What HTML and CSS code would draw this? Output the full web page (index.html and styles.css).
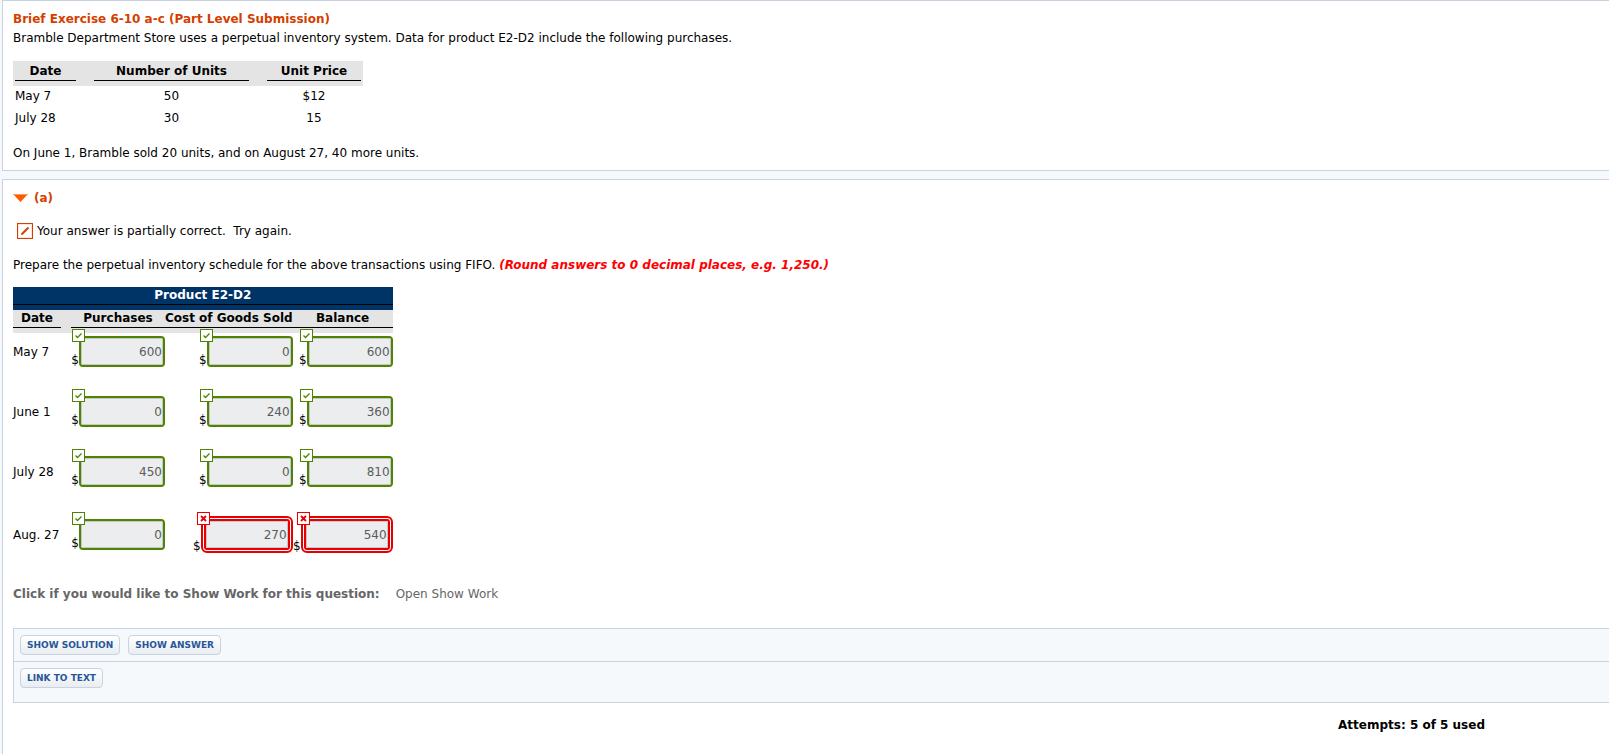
FILE: index.html
```html
<!DOCTYPE html>
<html lang="en">
<head>
<meta charset="utf-8">
<title>Brief Exercise 6-10 a-c</title>
<link rel="stylesheet" href="styles.css">
</head>
<body>
<svg class="symbols" aria-hidden="true">
  <symbol id="ok" viewBox="0 0 13 13"><rect x=".5" y=".5" width="12" height="12" fill="#fff" stroke="#4f8400"/><path d="M3.5 6.5 5.5 8.5 9.5 4.5" fill="none" stroke="#4f8400" stroke-width="1.3"/></symbol>
  <symbol id="bad" viewBox="0 0 13 13"><rect x=".5" y=".5" width="12" height="12" fill="#fff" stroke="#e60000"/><path d="M4 4 9 9M9 4 4 9" fill="none" stroke="#e60000" stroke-width="1.8"/></symbol>
</svg>
<main class="page">
  <section class="panel">
    <h1 class="title">Brief Exercise 6-10 a-c (Part Level Submission)</h1>
    <p class="text">Bramble Department Store uses a perpetual inventory system. Data for product E2-D2 include the following purchases.</p>
    <table class="data">
      <thead>
        <tr><th class="data-date"><span class="head">Date</span></th><td class="spacer"></td><th class="data-units"><span class="head">Number of Units</span></th><td class="spacer"></td><th class="data-price"><span class="head">Unit Price</span></th></tr>
      </thead>
      <tbody>
        <tr><td>May 7</td><td></td><td class="center">50</td><td></td><td class="center">$12</td></tr>
        <tr><td>July 28</td><td></td><td class="center">30</td><td></td><td class="center">15</td></tr>
      </tbody>
    </table>
    <p class="text">On June 1, Bramble sold 20 units, and on August 27, 40 more units.</p>
  </section>

  <section class="panel panel-part">
    <h2 class="title part"><svg class="arrow" viewBox="0 0 15 8" aria-hidden="true"><path d="M0 0H15L7.5 8Z" fill="#ff5a00"/><path d="M0 .5H15" stroke="#ff9a52"/></svg>(a)</h2>
    <p class="result"><svg class="partial" viewBox="0 0 16 16" aria-hidden="true"><rect x=".5" y=".5" width="15" height="15" fill="#fff" stroke="#d43f00"/><rect x="1.5" y="1.5" width="13" height="13" fill="#fff" stroke="#f9e5dc"/><path d="M4.5 11.5 11.5 4.5" stroke="#d43f00" stroke-width="2"/></svg>Your answer is partially correct.&nbsp; Try again.</p>
    <p class="text">Prepare the perpetual inventory schedule for the above transactions using FIFO. <em class="hint">(Round answers to 0 decimal places, e.g. 1,250.)</em></p>

    <table class="schedule">
      <thead>
        <tr class="product"><th colspan="5"><span class="head">Product E2-D2</span></th></tr>
        <tr class="columns"><th class="col-date"><span class="head">Date</span></th><td class="col-gap"></td><th class="col-purchases"><span class="head">Purchases</span></th><th class="col-cost"><span class="head">Cost of Goods Sold</span></th><th class="col-balance"><span class="head">Balance</span></th></tr>
      </thead>
      <tbody>
        <tr><td>May 7</td><td></td>
          <td><label class="field">$<span class="box"><input aria-label="May 7 purchases" value="600" readonly><svg class="badge"><use href="#ok"/></svg></span></label></td>
          <td><label class="field">$<span class="box"><input aria-label="May 7 cost of goods sold" value="0" readonly><svg class="badge"><use href="#ok"/></svg></span></label></td>
          <td><label class="field">$<span class="box"><input aria-label="May 7 balance" value="600" readonly><svg class="badge"><use href="#ok"/></svg></span></label></td></tr>
        <tr><td>June 1</td><td></td>
          <td><label class="field">$<span class="box"><input aria-label="June 1 purchases" value="0" readonly><svg class="badge"><use href="#ok"/></svg></span></label></td>
          <td><label class="field">$<span class="box"><input aria-label="June 1 cost of goods sold" value="240" readonly><svg class="badge"><use href="#ok"/></svg></span></label></td>
          <td><label class="field">$<span class="box"><input aria-label="June 1 balance" value="360" readonly><svg class="badge"><use href="#ok"/></svg></span></label></td></tr>
        <tr><td>July 28</td><td></td>
          <td><label class="field">$<span class="box"><input aria-label="July 28 purchases" value="450" readonly><svg class="badge"><use href="#ok"/></svg></span></label></td>
          <td><label class="field">$<span class="box"><input aria-label="July 28 cost of goods sold" value="0" readonly><svg class="badge"><use href="#ok"/></svg></span></label></td>
          <td><label class="field">$<span class="box"><input aria-label="July 28 balance" value="810" readonly><svg class="badge"><use href="#ok"/></svg></span></label></td></tr>
        <tr><td>Aug. 27</td><td></td>
          <td><label class="field">$<span class="box"><input aria-label="Aug. 27 purchases" value="0" readonly><svg class="badge"><use href="#ok"/></svg></span></label></td>
          <td><label class="field">$<span class="box wrong"><input aria-label="Aug. 27 cost of goods sold" value="270" readonly><svg class="badge"><use href="#bad"/></svg></span></label></td>
          <td><label class="field">$<span class="box wrong"><input aria-label="Aug. 27 balance" value="540" readonly><svg class="badge"><use href="#bad"/></svg></span></label></td></tr>
      </tbody>
    </table>

    <p class="work"><b>Click if you would like to Show Work for this question:</b><a href="#work">Open Show Work</a></p>

    <div class="tools">
      <div class="tool-row"><button type="button">SHOW SOLUTION</button><button type="button">SHOW ANSWER</button></div>
      <div class="tool-row tool-row-last"><button type="button">LINK TO TEXT</button></div>
    </div>
    <p class="attempts">Attempts: 5 of 5 used</p>
  </section>
</main>
</body>
</html>
```
FILE: styles.css
```css
* { box-sizing: border-box; }

body {
  margin: 0;
  background: #f5f9fc;
  color: #000;
  font: 12px/18px Verdana, "DejaVu Sans", sans-serif;
}

p, h1, h2 { margin: 0; }
.symbols { display: none; }

.page {
  display: flex;
  flex-direction: column;
  gap: 8px;
  min-height: 100vh;
  padding-left: 2px;
}

.panel {
  background: #fff;
  border: solid #c9d2e0;
  border-width: 1px 0 1px 1px;
  padding: 8px 0 8px 10px;
}

.panel-part {
  flex: 1;
  border-bottom: 0;
}

.title {
  color: #d43f00;
  font-size: 12px;
  line-height: 20px;
  font-weight: bold;
}

table { border-collapse: collapse; }
th, td { padding: 0; }

.head {
  display: block;
  border-bottom: 1px solid #000;
  line-height: 17px;
  white-space: nowrap;
}

.data { margin: 14px 0; }
.data thead { background: #e4e4e4; }
.data th { padding: 2px 2px 5px; }
.data tbody td { padding: 1px 2px 3px; }
.data .data-date { width: 65px; }
.data .data-units { width: 159px; }
.data .data-price { width: 98px; }
.data .spacer { width: 14px; }
.center { text-align: center; }

.part {
  display: flex;
  align-items: center;
  gap: 6px;
}
.arrow { width: 15px; height: 8px; }

.result {
  display: flex;
  align-items: center;
  gap: 4px;
  margin: 14px 0 16px 4px;
}
.partial { width: 16px; height: 16px; }
.hint { color: #f00; font-weight: bold; }

.schedule { margin-top: 13px; }
.schedule th { padding-bottom: 5px; }
.product { background: #003366; color: #fff; }
.columns { background: #e4e4e4; }
.col-date { width: 48px; }
.col-gap { width: 10px; }
.col-purchases { width: 94px; }
.col-cost { width: 127px; }
.col-balance { width: 100px; }
.schedule tbody td {
  padding: 3px 0 26px;
  white-space: nowrap;
}

.field {
  display: flex;
  justify-content: flex-end;
  align-items: flex-end;
  line-height: 14px;
}
.box {
  position: relative;
  border: 2px solid #4f8400;
  border-radius: 4px;
}
.wrong {
  border: 5px double #e60000;
  border-radius: 6px;
}
.box input {
  display: block;
  width: 82px;
  height: 27px;
  border: 1px solid #c6c6cb;
  border-radius: 2px;
  padding: 0;
  background: #ebedef;
  color: #5c5c5c;
  font: inherit;
  text-align: right;
}
.badge {
  position: absolute;
  left: -9px;
  top: -9px;
  width: 13px;
  height: 13px;
}

.work {
  display: flex;
  gap: 16px;
  margin-top: 6px;
  color: #666;
}
.work a { color: inherit; text-decoration: none; }

.tools {
  margin-top: 25px;
  background: #f5f9fc;
  border: solid #c9d2e0;
  border-width: 1px 0 1px 1px;
}
.tool-row {
  display: flex;
  gap: 8px;
  padding: 6px;
}
.tool-row-last {
  border-top: 1px solid #c9d2e0;
  padding-bottom: 14px;
}
.tools button {
  height: 20px;
  padding: 0 6px;
  border: 1px solid #c9d2e0;
  border-radius: 4px;
  background: linear-gradient(#fff, #e9edf1);
  color: #28569a;
  font: bold 9px/16px Verdana, "DejaVu Sans", sans-serif;
}

.attempts {
  margin: 13px 124px 0 0;
  font-weight: bold;
  text-align: right;
}
```
